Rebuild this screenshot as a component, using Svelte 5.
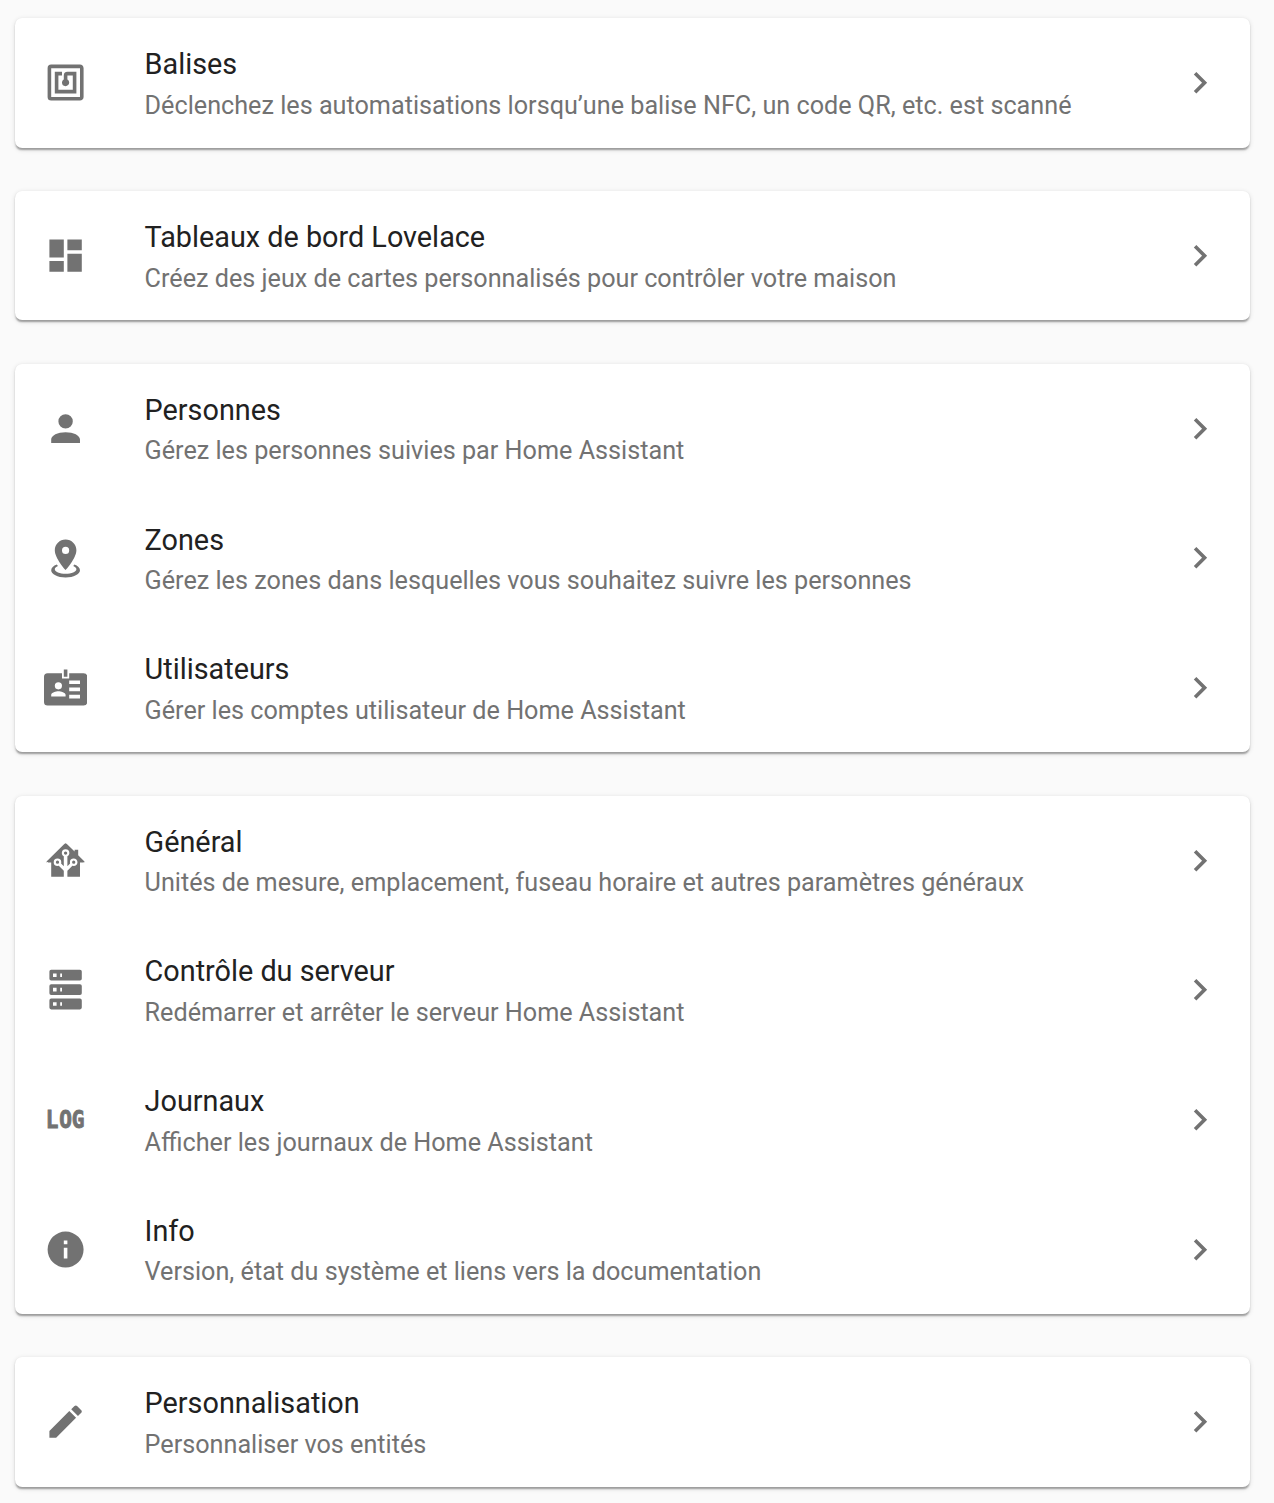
<script>
    const chevron = 'M8.59,16.58L13.17,12L8.59,7.41L10,6L16,12L10,18L8.59,16.58Z';

    const icons = {
        nfc: 'M18,6H13A2,2 0 0,0 11,8V10.28C10.41,10.62 10,11.26 10,12A2,2 0 0,0 12,14C13.11,14 14,13.1 14,12C14,11.26 13.6,10.62 13,10.28V8H16V16H8V8H10V6H8L6,6V18H18M20,20H4V4H20M20,2H4A2,2 0 0,0 2,4V20A2,2 0 0,0 4,22H20C21.11,22 22,21.1 22,20V4C22,2.89 21.11,2 20,2Z',
        dashboard: 'M13,3V9H21V3M13,21H21V11H13M3,21H11V15H3M3,13H11V3H3V13Z',
        account: 'M12,4A4,4 0 0,1 16,8A4,4 0 0,1 12,12A4,4 0 0,1 8,8A4,4 0 0,1 12,4M12,14C16.42,14 20,15.79 20,18V20H4V18C4,15.79 7.58,14 12,14Z',
        marker: 'M12,2C15.31,2 18,4.66 18,7.95C18,12.41 12,19 12,19C12,19 6,12.41 6,7.95C6,4.66 8.69,2 12,2M12,6A2,2 0 0,0 10,8A2,2 0 0,0 12,10A2,2 0 0,0 14,8A2,2 0 0,0 12,6M20,19C20,21.21 16.42,23 12,23C7.58,23 4,21.21 4,19C4,17.71 5.22,16.56 7.11,15.83L7.75,16.74C6.67,17.19 6,17.81 6,18.5C6,19.88 8.69,21 12,21C15.31,21 18,19.88 18,18.5C18,17.81 17.33,17.19 16.25,16.74L16.89,15.83C18.78,16.56 20,17.71 20,19Z',
        badge: 'M22,4H14V7H10V4H2A2,2 0 0,0 0,6V20A2,2 0 0,0 2,22H22A2,2 0 0,0 24,20V6A2,2 0 0,0 22,4M8,9A2,2 0 0,1 10,11A2,2 0 0,1 8,13A2,2 0 0,1 6,11A2,2 0 0,1 8,9M12,17H4V16C4,14.67 6.67,14 8,14C9.33,14 12,14.67 12,16V17M20,18H14V16H20V18M20,14H14V12H20V14M20,10H14V8H20V10M13,6H11V2H13V6Z',
        home: 'M21.8,13H20V21H13V17.67L15.79,14.88L16.5,15C17.66,15 18.6,14.06 18.6,12.9C18.6,11.74 17.66,10.8 16.5,10.8A2.1,2.1 0 0,0 14.4,12.9L14.5,13.61L13,15.13V9.65C13.66,9.29 14.1,8.6 14.1,7.8A2.1,2.1 0 0,0 12,5.7A2.1,2.1 0 0,0 9.9,7.8C9.9,8.6 10.34,9.29 11,9.65V15.13L9.5,13.61L9.6,12.9A2.1,2.1 0 0,0 7.5,10.8A2.1,2.1 0 0,0 5.4,12.9A2.1,2.1 0 0,0 7.5,15L8.21,14.88L11,17.67V21H4V13H2.25C1.83,13 1.42,13 1.42,12.79C1.43,12.57 1.85,12.15 2.28,11.72L11,3C11.33,2.67 11.67,2.33 12,2.33C12.33,2.33 12.67,2.67 13,3L17,7V6H19V9L21.78,11.78C22.18,12.18 22.59,12.59 22.6,12.8C22.6,13 22.2,13 21.8,13M7.5,12A0.9,0.9 0 0,1 8.4,12.9A0.9,0.9 0 0,1 7.5,13.8A0.9,0.9 0 0,1 6.6,12.9A0.9,0.9 0 0,1 7.5,12M16.5,12C17,12 17.4,12.4 17.4,12.9C17.4,13.4 17,13.8 16.5,13.8A0.9,0.9 0 0,1 15.6,12.9A0.9,0.9 0 0,1 16.5,12M12,6.9C12.5,6.9 12.9,7.3 12.9,7.8C12.9,8.3 12.5,8.7 12,8.7C11.5,8.7 11.1,8.3 11.1,7.8C11.1,7.3 11.5,6.9 12,6.9Z',
        server: 'M4,1H20A1,1 0 0,1 21,2V6A1,1 0 0,1 20,7H4A1,1 0 0,1 3,6V2A1,1 0 0,1 4,1M4,9H20A1,1 0 0,1 21,10V14A1,1 0 0,1 20,15H4A1,1 0 0,1 3,14V10A1,1 0 0,1 4,9M4,17H20A1,1 0 0,1 21,18V22A1,1 0 0,1 20,23H4A1,1 0 0,1 3,22V18A1,1 0 0,1 4,17M9,5H10V3H9V5M9,13H10V11H9V13M9,21H10V19H9V21M5,3V5H7V3H5M5,11V13H7V11H5M5,19V21H7V19H5Z',
        info: 'M13,9H11V7H13M13,17H11V11H13M12,2A10,10 0 0,0 2,12A10,10 0 0,0 12,22A10,10 0 0,0 22,12A10,10 0 0,0 12,2Z',
        pencil: 'M20.71,7.04C21.1,6.65 21.1,6 20.71,5.63L18.37,3.29C18,2.9 17.35,2.9 16.96,3.29L15.12,5.12L18.87,8.87M3,17.25V21H6.75L17.81,9.93L14.06,6.18L3,17.25Z'
    };

    const groups = [
        [
            { icon: 'nfc', title: 'Balises', text: 'Déclenchez les automatisations lorsqu’une balise NFC, un code QR, etc. est scanné' }
        ],
        [
            { icon: 'dashboard', title: 'Tableaux de bord Lovelace', text: 'Créez des jeux de cartes personnalisés pour contrôler votre maison' }
        ],
        [
            { icon: 'account', title: 'Personnes', text: 'Gérez les personnes suivies par Home Assistant' },
            { icon: 'marker', title: 'Zones', text: 'Gérez les zones dans lesquelles vous souhaitez suivre les personnes' },
            { icon: 'badge', title: 'Utilisateurs', text: 'Gérer les comptes utilisateur de Home Assistant' }
        ],
        [
            { icon: 'home', title: 'Général', text: 'Unités de mesure, emplacement, fuseau horaire et autres paramètres généraux' },
            { icon: 'server', title: 'Contrôle du serveur', text: 'Redémarrer et arrêter le serveur Home Assistant' },
            { icon: 'log', title: 'Journaux', text: 'Afficher les journaux de Home Assistant' },
            { icon: 'info', title: 'Info', text: 'Version, état du système et liens vers la documentation' }
        ],
        [
            { icon: 'pencil', title: 'Personnalisation', text: 'Personnaliser vos entités' }
        ]
    ];
</script>

<main class="config">
    {#each groups as items}
        <section class="card">
            {#each items as item}
                <a class="item" href="#{item.icon}">
                    <svg class="icon" viewBox="0 0 24 24" aria-hidden="true">
                        {#if item.icon === 'log'}
                            <text class="log" transform="translate(0 16.8) scale(0.88 1)" x="1.1 9.7 17.5">LOG</text>
                        {:else}
                            <path d={icons[item.icon]} />
                        {/if}
                    </svg>
                    <div class="body">
                        <div class="title">{item.title}</div>
                        <div class="secondary">{item.text}</div>
                    </div>
                    <svg class="icon" viewBox="-0.2 -0.1 24 24" aria-hidden="true">
                        <path d={chevron} />
                    </svg>
                </a>
            {/each}
        </section>
    {/each}
</main>

<style>
    :global(body) {
        background: #fafafa;
    }

    .config {
        display: flex;
        flex-direction: column;
        gap: 43.2px;
        padding: 18px 24px 16px 15px;
        font-family: Roboto, "Noto Sans", sans-serif;
    }

    .card {
        background: #fff;
        border-radius: 7.2px;
        box-shadow:
            0 3.6px 1.8px -1.8px rgba(0, 0, 0, 0.2),
            0 1.8px 1.8px 0 rgba(0, 0, 0, 0.14),
            0 1.8px 5.4px 0 rgba(0, 0, 0, 0.12);
    }

    .item {
        display: flex;
        align-items: center;
        box-sizing: border-box;
        height: 129.6px;
        padding: 0 28.8px;
        color: #212121;
        text-decoration: none;
    }

    .icon {
        flex: none;
        width: 43.2px;
        height: 43.2px;
        fill: #727272;
    }

    .log {
        font-family: "DejaVu Sans Mono", monospace;
        font-size: 13.3px;
        font-weight: 700;
        stroke: #727272;
        stroke-width: 0.5px;
    }

    .body {
        flex: 1;
        min-width: 0;
        margin-left: 57.6px;
        padding-top: 1.65px;
        white-space: nowrap;
    }

    .title {
        font-size: 28.8px;
        line-height: 43.2px;
    }

    .secondary {
        font-size: 25.2px;
        line-height: 37px;
        padding-top: 0.35px;
        color: #727272;
    }
</style>
